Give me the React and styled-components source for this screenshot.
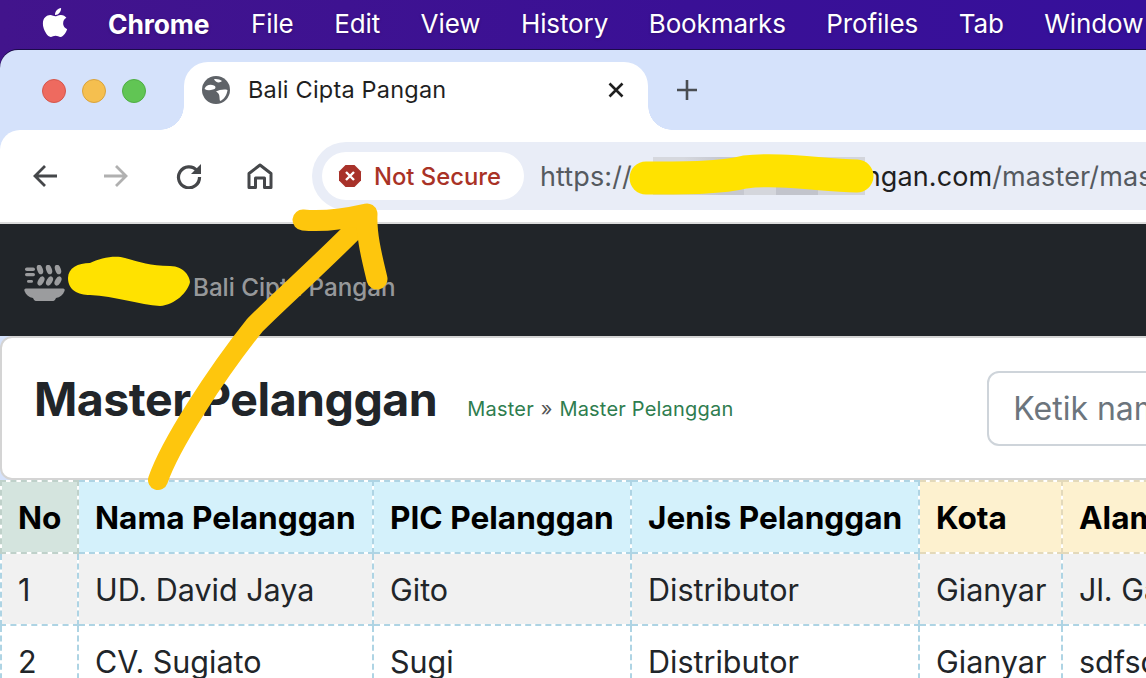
import React from 'react';
import styled, { createGlobalStyle } from 'styled-components';
import { FaApple } from 'react-icons/fa';

const Global = createGlobalStyle`
  html, body { margin: 0; padding: 0; width: 1146px; height: 678px; overflow: hidden; background: #fff; }
  * { box-sizing: border-box; }
  body { font-family: Inter, "Noto Sans", "Liberation Sans", sans-serif; -webkit-font-smoothing: antialiased; }
`;

const Screen = styled.div`
  position: relative;
  width: 1146px;
  height: 678px;
  overflow: hidden;
  background: linear-gradient(90deg, #42148c 0%, #3a1096 60%, #36109b 100%);
`;
const MenuBar = styled.nav`
  height: 50px;
  display: flex;
  align-items: center;
  gap: 40.5px;
  padding: 0 0 3px 41px;
  color: #fff;
  font-size: 26px;
  white-space: nowrap;
  text-shadow: 0 1px 3px rgba(0, 0, 0, .25);
`;
const AppleMark = styled(FaApple)`
  flex: none;
  width: 28px;
  height: 33px;
  margin-right: -1.5px;
  margin-top: -2px;
`;
const MenuItem = styled.span`
  flex: none;
  letter-spacing: -0.1px;
`;
const AppName = styled(MenuItem)`
  font-weight: 700;
  font-size: 26.4px;
  margin-right: 1px;
`;
const Window = styled.div`
  background: #d5e2fb;
  border-radius: 18px 0 0 0;
  height: 628px;
  overflow: hidden;
  box-shadow: 0 -1px 0 #1c0b4a;
`;
const TabStrip = styled.div`
  height: 80px;
  display: flex;
  align-items: flex-end;
`;
const Lights = styled.div`
  width: 184px;
  height: 68px;
  display: flex;
  gap: 16px;
  padding: 17px 0 0 42px;
`;
const Light = styled.i`
  width: 24px;
  height: 24px;
  border-radius: 50%;
  background: ${p => p.$c};
  border: 1px solid ${p => p.$b};
`;
const Tab = styled.div`
  position: relative;
  width: 464px;
  height: 68px;
  background: #fff;
  border-radius: 24px 24px 0 0;
  display: flex;
  align-items: center;
  padding: 0 23px 13px 18px;
  color: #1f1f1f;
  font-size: 23.5px;
  letter-spacing: .2px;
  &::before, &::after {
    content: '';
    position: absolute;
    bottom: 0;
    width: 24px;
    height: 24px;
  }
  &::before { left: -24px; background: radial-gradient(circle at 0 0, #d5e2fb 23.5px, #fff 24px); }
  &::after { right: -24px; background: radial-gradient(circle at 100% 0, #d5e2fb 23.5px, #fff 24px); }
`;
const TabTitle = styled.span`
  flex: 1;
  margin-left: 18px;
`;
const NewTab = styled.svg`
  width: 22px;
  height: 22px;
  margin-left: 28px;
  align-self: center;
`;
const Toolbar = styled.div`
  height: 94px;
  background: #fff;
  border-radius: 20px 0 0 0;
  border-bottom: 2px solid #dcdcdc;
  display: flex;
  align-items: flex-start;
  padding: 12px 0 0 32px;
`;
const NavIcon = styled.svg`
  width: 26px;
  height: 26px;
  margin-top: 21px;
  margin-right: ${p => p.$gap}px;
  flex: none;
`;
const Omnibox = styled.div`
  flex: 1;
  min-width: 0;
  height: 68px;
  margin-left: 39px;
  background: #e9edf7;
  border-radius: 34px 0 0 34px;
  display: flex;
  align-items: center;
  padding-left: 10px;
  overflow: hidden;
  white-space: nowrap;
`;
const SecurityChip = styled.div`
  flex: none;
  width: 202px;
  height: 48px;
  border-radius: 24px;
  background: #fff;
  display: flex;
  align-items: center;
  gap: 12px;
  padding-left: 16px;
  color: #a93226;
  font-size: 23.8px;
  font-weight: 500;
`;
const Url = styled.div`
  margin-left: 16px;
  display: flex;
  align-items: center;
  font-size: 27px;
  color: #555a60;
  letter-spacing: .1px;
`;
const Mosaic = styled.span`
  width: 233px;
  height: 38px;
  background: linear-gradient(90deg, transparent 0 9%, #d6d8de 9% 22%, #c6c8d0 38% 48%, #d4d6dc 48% 62%, #c2c4cc 62% 80%, #d3d5db 80% 100%);
`;
const Host = styled.span`
  color: #1f1f1f;
`;
const Navbar = styled.header`
  height: 112px;
  background: #212529;
  display: flex;
  align-items: center;
  padding: 6px 0 0 24px;
  color: rgba(255, 255, 255, .55);
  font-size: 24.2px;
  font-weight: 500;
`;
const BrandName = styled.span`
  margin-left: 128px;
  margin-top: 8px;
`;
const TitleCard = styled.section`
  width: 1200px;
  height: 144px;
  background: #fff;
  border: 2px solid #d4d4d4;
  border-radius: 12px;
  display: flex;
  align-items: center;
  padding: 0 0 14px 32px;
  white-space: nowrap;
`;
const Title = styled.h1`
  margin: -4px 0 0;
  font-size: 46.5px;
  font-weight: 700;
  letter-spacing: -0.5px;
  color: #212529;
`;
const Crumbs = styled.div`
  margin-left: 30px;
  margin-top: 16px;
  color: #2f7d4f;
  font-size: 20px;
  letter-spacing: .2px;
  width: 520px;
  flex: none;
`;
const Sep = styled.span`
  color: #555;
  margin: 0 1px;
`;
const Search = styled.input`
  width: 400px;
  height: 75px;
  flex: none;
  margin-top: 14px;
  border: 2px solid #ced4da;
  border-radius: 12px;
  padding: 0 24px;
  font: 400 32px Inter, sans-serif;
  &::placeholder { color: #6c757d; opacity: 1; }
`;
const Grid = styled.table`
  border-collapse: collapse;
  table-layout: fixed;
  width: 1461px;
  font-size: 30.5px;
  color: #212529;
  background: #fff;
`;
const HeadCell = styled.th`
  height: 72px;
  padding: 0 16px;
  text-align: left;
  font-weight: 700;
  font-size: 31.6px;
  color: #000;
  white-space: nowrap;
  overflow: hidden;
  background: ${p => p.$bg};
  border: 2px dashed ${p => p.$line};
`;
const Cell = styled.td`
  height: 72px;
  padding: 0 16px;
  white-space: nowrap;
  overflow: hidden;
  border: 2px dashed #aed4e4;
  background: ${p => (p.$odd ? '#f1f1f1' : '#fff')};
`;
const Overlay = styled.svg`
  position: absolute;
  left: 0;
  top: 0;
  pointer-events: none;
`;

const cols = [77, 295, 258, 288, 143, 400];
const heads = [
  ['No', '#d4e4de', '#bfd1ca'],
  ['Nama Pelanggan', '#d4f1fb', '#aed4e4'],
  ['PIC Pelanggan', '#d4f1fb', '#aed4e4'],
  ['Jenis Pelanggan', '#d4f1fb', '#aed4e4'],
  ['Kota', '#fdf1cf', '#e3d9ba'],
  ['Alamat', '#fdf1cf', '#e3d9ba'],
];
const rows = [
  ['1', 'UD. David Jaya', 'Gito', 'Distributor', 'Gianyar', 'Jl. Gajah Mada'],
  ['2', 'CV. Sugiato', 'Sugi', 'Distributor', 'Gianyar', 'sdfsdf'],
];

export default function App() {
  return (
    <Screen>
      <Global />
      <MenuBar>
        <AppleMark />
        <AppName>Chrome</AppName>
        {['File', 'Edit', 'View', 'History', 'Bookmarks', 'Profiles', 'Tab', 'Window'].map(m => (
          <MenuItem key={m}>{m}</MenuItem>
        ))}
      </MenuBar>
      <Window>
        <TabStrip>
          <Lights>
            <Light $c="#ee6a5f" $b="#d5564b" />
            <Light $c="#f5bf4f" $b="#d9a33c" />
            <Light $c="#61c554" $b="#4fae43" />
          </Lights>
          <Tab>
            <svg width="28" height="28" viewBox="0 0 28 28">
              <circle cx="14" cy="14" r="14" fill="#5f6368" />
              <path d="M2.5 13 C4 9 8 8 12 9.5 C14.5 10.5 13.5 13.5 11 13.5 C8 14.5 5 14.5 2.5 13Z M14 15.5 C17 14 22 13 25.5 14 C25 19 21.5 24 18 25 C17 21 18.5 18 14 15.5Z M12 3 C15 2.6 18 3.2 20 5 C18 7.2 13.5 7 12 3Z" fill="#fff" />
            </svg>
            <TabTitle>Bali Cipta Pangan</TabTitle>
            <svg width="18" height="18" viewBox="0 0 18 18">
              <path d="M2.5 2.5 L15.5 15.5 M15.5 2.5 L2.5 15.5" stroke="#1f1f1f" strokeWidth="2.6" />
            </svg>
          </Tab>
          <NewTab viewBox="0 0 22 22">
            <path d="M11 1 V21 M1 11 H21" stroke="#4a4d52" strokeWidth="2.6" />
          </NewTab>
        </TabStrip>
        <Toolbar>
          <NavIcon $gap={45} viewBox="0 0 26 26" fill="none" stroke="#45474a" strokeWidth="2.8">
            <path d="M25 13 H3 M13 3 L3 13 L13 23" />
          </NavIcon>
          <NavIcon $gap={47} viewBox="0 0 26 26" fill="none" stroke="#b0b0b0" strokeWidth="2.8">
            <path d="M1 13 H23 M13 3 L23 13 L13 23" />
          </NavIcon>
          <NavIcon $gap={45} viewBox="0 0 26 26" fill="none" stroke="#45474a" strokeWidth="3.2">
            <path d="M21 7.5 A10.5 10.5 0 1 0 23.5 14" />
            <path d="M25 1 V11 H15 Z" fill="#45474a" stroke="none" />
          </NavIcon>
          <NavIcon $gap={0} viewBox="0 0 26 26" fill="none" stroke="#45474a" strokeWidth="3" strokeLinejoin="round">
            <path d="M2 24.5 V10.5 L13 2 L24 10.5 V24.5 H17.5 V15 H8.5 V24.5 Z" />
          </NavIcon>
          <Omnibox>
            <SecurityChip>
              <svg width="24" height="24" viewBox="0 0 24 24">
                <path d="M7.5 1 H16.5 L23 7.5 V16.5 L16.5 23 H7.5 L1 16.5 V7.5 Z" fill="#a8322a" />
                <path d="M8 8 L16 16 M16 8 L8 16" stroke="#fff" strokeWidth="2.4" />
              </svg>
              Not Secure
            </SecurityChip>
            <Url>
              https://
              <Mosaic />
              <Host>ngan.com</Host>/master/master-pelanggan
            </Url>
          </Omnibox>
        </Toolbar>
        <Navbar>
          <svg width="41" height="37" viewBox="0 0 41 37" fill="#9b9c9e">
            <path d="M2 23.5 H39 C40.5 23.5 41 24.5 40.5 26 C39 30 36 32.5 32 33 C31 35.5 30 36 28 36 H13 C11 36 10 35.5 9 33 C5 32.5 2 30 0.5 26 C0 24.5 0.5 23.5 2 23.5Z" />
            <rect x="1" y="2.5" width="10" height="3.6" rx="1.8" />
            <rect x="1" y="8" width="10" height="3.2" rx="1.6" />
            <rect x="3" y="15" width="6" height="2.8" rx="1.4" />
            <ellipse cx="16" cy="4.5" rx="2.8" ry="5" transform="rotate(-20 16 4.5)" />
            <ellipse cx="25" cy="4.5" rx="2.8" ry="5" transform="rotate(-20 25 4.5)" />
            <ellipse cx="34" cy="4.5" rx="2.8" ry="5" transform="rotate(-20 34 4.5)" />
            <ellipse cx="17" cy="16" rx="2.8" ry="5" transform="rotate(30 17 16)" />
            <ellipse cx="25.5" cy="16" rx="2.8" ry="5" transform="rotate(30 25.5 16)" />
            <ellipse cx="34" cy="16" rx="2.8" ry="5" transform="rotate(30 34 16)" />
          </svg>
          <BrandName>Bali Cipta Pangan</BrandName>
        </Navbar>
        <TitleCard>
          <Title>Master Pelanggan</Title>
          <Crumbs>Master <Sep>»</Sep> Master Pelanggan</Crumbs>
          <Search placeholder="Ketik nama pelanggan" />
        </TitleCard>
        <Grid>
          <colgroup>
            {cols.map((w, i) => <col key={i} width={w} />)}
          </colgroup>
          <thead>
            <tr>
              {heads.map(([t, bg, line]) => (
                <HeadCell key={t} $bg={bg} $line={line}>{t}</HeadCell>
              ))}
            </tr>
          </thead>
          <tbody>
            {rows.map((r, i) => (
              <tr key={r[0]}>
                {r.map((c, j) => <Cell key={j} $odd={i === 0}>{c}</Cell>)}
              </tr>
            ))}
          </tbody>
        </Grid>
      </Window>
      <Overlay width="1146" height="678" viewBox="0 0 1146 678" fill="none" strokeLinecap="round" strokeLinejoin="round">
        <path d="M646 178 C690 178 720 178 745 172 C780 168 820 175 857 176" stroke="#ffe200" strokeWidth="33" />
        <path d="M68 278 C68 268 78 263 90 263 C100 258 115 255 125 258 C140 262 150 266 170 266 C185 266 190 278 190 282 C188 292 175 305 160 306 C140 305 115 296 90 295 C78 295 68 290 68 278Z" fill="#ffe200" />
        <path d="M158 480 C170 445 215 375 255 325 C285 295 320 265 367 217" stroke="#fec60d" strokeWidth="20" />
        <path d="M303 220 C325 222 345 219 367 214 C366 235 372 258 377 279" stroke="#fec60d" strokeWidth="21" />
      </Overlay>
    </Screen>
  );
}
